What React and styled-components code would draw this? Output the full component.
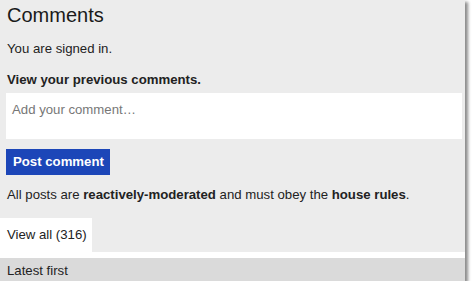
import React from "react";
import styled, { createGlobalStyle } from "styled-components";

const Global = createGlobalStyle`
  body {
    margin: 0;
    background: #ffffff;
    font-family: "Liberation Sans", Arial, sans-serif;
  }
`;

const App = () => {
  return (
    <>
      <Global />
      <Panel>
        <Body>
          <Title>Comments</Title>
          <Line gap={14}>You are signed in.</Line>
          <Line gap={14.5} bold>
            View your previous comments.
          </Line>
          <CommentBox placeholder="Add your comment…" />
          <PostButton>Post comment</PostButton>
          <Line gap={12}>
            All posts are <b>reactively-moderated</b> and must obey the{" "}
            <b>house rules</b>.
          </Line>
        </Body>
        <Tabs>
          <Tab>View all (316)</Tab>
        </Tabs>
        <SortBar>Latest first</SortBar>
      </Panel>
    </>
  );
};

export default App;

const Panel = styled.div`
  width: 465px;
  height: 281px;
  background: #ececec;
  box-shadow: 3px 2px 3px rgba(0, 0, 0, 0.45);
  display: flex;
  flex-direction: column;
  color: #222;
`;

const Body = styled.div`
  padding: 3px 3px 0 6px;
  display: flex;
  flex-direction: column;
`;

const Title = styled.h2`
  margin: 0 0 0 1px;
  font-size: 20px;
  line-height: 24px;
  font-weight: normal;
  color: #1a1a1a;
`;

const Line = styled.p`
  margin: ${(p) => p.gap}px 0 0 1px;
  font-size: 13.2px;
  line-height: 16px;
  font-weight: ${(p) => (p.bold ? "bold" : "normal")};
  b {
    font-weight: bold;
  }
`;

const CommentBox = styled.textarea`
  margin-top: 5px;
  height: 46px;
  box-sizing: border-box;
  border: none;
  resize: none;
  outline: none;
  background: #fff;
  padding: 9px 6px 0;
  font-family: "Liberation Sans", Arial, sans-serif;
  font-size: 13.2px;
  line-height: 16px;
  &::placeholder {
    color: #777;
  }
`;

const PostButton = styled.button`
  align-self: flex-start;
  margin-top: 10px;
  height: 26px;
  padding: 0 6px 0 7px;
  border: none;
  background: #1c46b8;
  color: #fff;
  font-family: "Liberation Sans", Arial, sans-serif;
  font-size: 13.2px;
  font-weight: bold;
  line-height: 16px;
`;

const Tabs = styled.div`
  margin-top: 15px;
  display: flex;
  border-bottom: 6px solid #fff;
`;

const Tab = styled.div`
  width: 92px;
  height: 34px;
  box-sizing: border-box;
  padding: 9px 0 0 7px;
  background: #fff;
  font-size: 13.2px;
  line-height: 16px;
`;

const SortBar = styled.div`
  flex: 1;
  background: #dadada;
  padding: 5px 7px 0;
  font-size: 13.2px;
  line-height: 16px;
`;
